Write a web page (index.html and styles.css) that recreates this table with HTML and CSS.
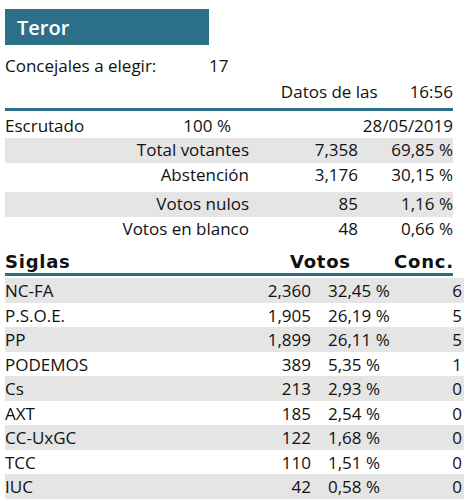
FILE: index.html
```html
<!DOCTYPE html>
<html lang="es">
<head>
<meta charset="utf-8">
<title>Teror</title>
<link rel="stylesheet" href="styles.css">
</head>
<body>
<div class="page">
  <div class="title">Teror</div>
  <div class="concejales"><span class="c-label">Concejales a elegir:</span><span class="c-num">17</span></div>
  <div class="datos"><span>Datos de las</span><span class="hora">16:56</span></div>
  <div class="summary">
    <div class="srow first"><span class="esc">Escrutado</span><span class="esc-pct">100 %</span><span class="fecha">28/05/2019</span></div>
    <div class="srow grey"><span class="lab">Total votantes</span><span class="num">7,358</span><span class="num">69,85 %</span></div>
    <div class="srow"><span class="lab">Abstención</span><span class="num">3,176</span><span class="num">30,15 %</span></div>
    <div class="srow grey gap"><span class="lab">Votos nulos</span><span class="num">85</span><span class="num">1,16 %</span></div>
    <div class="srow"><span class="lab">Votos en blanco</span><span class="num">48</span><span class="num">0,66 %</span></div>
  </div>
  <div class="phead"><span class="h-sig">Siglas</span><span class="h-vot">Votos</span><span class="h-conc">Conc.</span></div>
  <div class="parties">
    <div class="prow grey"><span class="name">NC-FA</span><span class="v">2,360</span><span class="p">32,45 %</span><span class="c">6</span></div>
    <div class="prow"><span class="name">P.S.O.E.</span><span class="v">1,905</span><span class="p">26,19 %</span><span class="c">5</span></div>
    <div class="prow grey"><span class="name">PP</span><span class="v">1,899</span><span class="p">26,11 %</span><span class="c">5</span></div>
    <div class="prow"><span class="name">PODEMOS</span><span class="v">389</span><span class="p">5,35 %</span><span class="c">1</span></div>
    <div class="prow grey"><span class="name">Cs</span><span class="v">213</span><span class="p">2,93 %</span><span class="c">0</span></div>
    <div class="prow"><span class="name">AXT</span><span class="v">185</span><span class="p">2,54 %</span><span class="c">0</span></div>
    <div class="prow grey"><span class="name">CC-UxGC</span><span class="v">122</span><span class="p">1,68 %</span><span class="c">0</span></div>
    <div class="prow"><span class="name">TCC</span><span class="v">110</span><span class="p">1,51 %</span><span class="c">0</span></div>
    <div class="prow grey"><span class="name">IUC</span><span class="v">42</span><span class="p">0,58 %</span><span class="c">0</span></div>
  </div>
</div>
</body>
</html>
```
FILE: styles.css
```css
html, body {
  margin: 0;
  padding: 0;
  background: #ffffff;
}
.page {
  padding: 9px 0 0 5px;
  font-family: "Open Sans", "DejaVu Sans", sans-serif;
  font-size: 17px;
  color: #111111;
}
.title {
  width: 192px;
  height: 36px;
  line-height: 38px;
  padding-left: 12px;
  background: #2b6f88;
  color: #ffffff;
  font-size: 20px;
  font-weight: 600;
}
.concejales {
  display: flex;
  height: 26px;
  line-height: 26px;
  margin-top: 8px;
}
.c-label {
  width: 204px;
}
.datos {
  display: flex;
  justify-content: flex-end;
  width: 448px;
  height: 26px;
  line-height: 26px;
}
.hora {
  margin-left: 32px;
}
.summary {
  width: 448px;
  border-top: 3px solid #2b6f88;
  margin-top: 3px;
}
.srow {
  display: grid;
  grid-template-columns: 244px 109px 95px;
  height: 24.5px;
  line-height: 24.5px;
}
.srow.first {
  grid-template-columns: 1fr 120px 222px;
  height: 27px;
  line-height: 28px;
  box-sizing: border-box;
  padding-top: 1px;
}
.esc-pct, .fecha, .num, .lab {
  text-align: right;
}
.srow.gap {
  margin-top: 5px;
}
.grey {
  background: #e5e5e5;
}
.phead {
  width: 448px;
  height: 32px;
  border-bottom: 3px solid #2b6f88;
  font-family: "DejaVu Sans", sans-serif;
  font-weight: bold;
  font-size: 18px;
  letter-spacing: 0.75px;
  line-height: 22px;
  display: grid;
  grid-template-columns: 285px 1fr 64px;
  align-items: end;
}
.h-conc {
  text-align: right;
  margin-right: -0.75px;
}
.parties {
  width: 459px;
  margin-top: 2px;
}
.prow {
  display: grid;
  grid-template-columns: 250px 56px 100px 1fr;
  height: 24.5px;
  line-height: 25px;
}
.prow .v {
  text-align: right;
}
.prow .p {
  padding-left: 17px;
}
.prow .c {
  text-align: right;
  padding-right: 2px;
}
```
